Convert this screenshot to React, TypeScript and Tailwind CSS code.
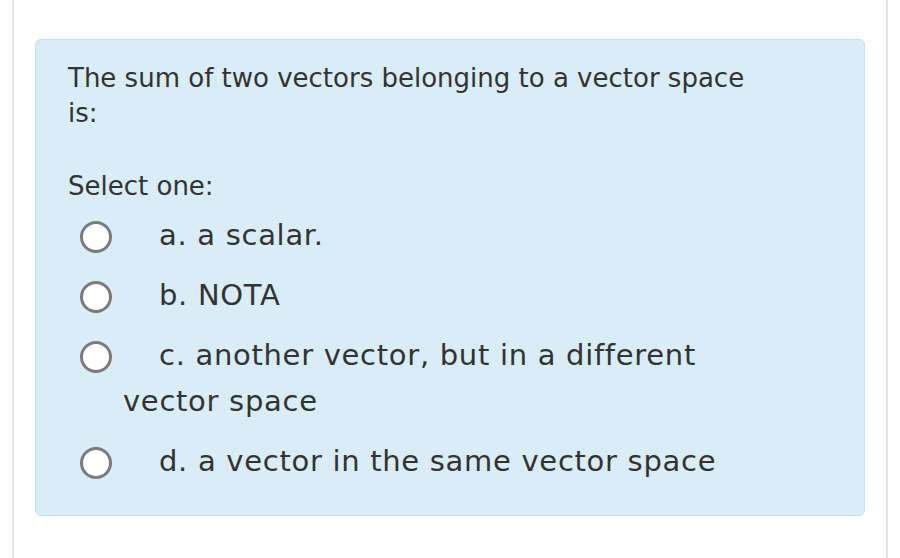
import React from 'react';

const options = [
  'a. a scalar.',
  'b. NOTA',
  'c. another vector, but in a different vector space',
  'd. a vector in the same vector space',
];

export default function App() {
  return (
    <div
      className="h-[558px] bg-white px-[12px] text-[#333]"
      style={{ fontFamily: '"DejaVu Sans", Verdana, sans-serif' }}
    >
      <div className="h-full border-x-[2px] border-[#e3e3e3] px-[21px] pt-[39px]">
        {/* Question box */}
        <div className="rounded-[6px] border border-[#bce8f1] bg-[#d9edf7] pl-[32px] pr-[99px] pt-[21px] pb-[24px] text-[26px]">
          <p className="leading-[35px]">The sum of two vectors belonging to a vector space is:</p>

          <p className="mt-[38px] leading-[35px]">Select one:</p>

          <div className="mt-[1px] text-[29px] tracking-[0.7px]">
            {options.map((opt, i) => (
              <div key={i} className="py-[7px] pl-[55px] leading-[46px]">
                <span className="ml-[-43px] mr-[47px] inline-block h-[32px] w-[32px] rounded-full border-[3px] border-[#7a7a7a] bg-white align-middle" />
                {opt}
              </div>
            ))}
          </div>
        </div>
      </div>
    </div>
  );
}
